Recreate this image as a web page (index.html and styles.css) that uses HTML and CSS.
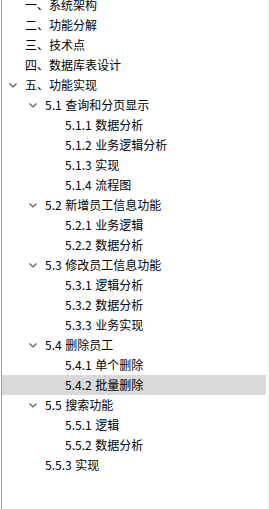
FILE: index.html
```html
<!DOCTYPE html>
<html lang="zh-CN">

<head>
    <meta charset="UTF-8">
    <meta name="viewport" content="width=device-width, initial-scale=1.0">
    <title>目录</title>
    <link rel="stylesheet" href="styles.css">
</head>

<body>
    <div id="outline">
        <ul class="tree">
            <li><div class="node"><span class="arrow"></span><span class="text">一、系统架构</span></div></li>
            <li><div class="node"><span class="arrow"></span><span class="text">二、功能分解</span></div></li>
            <li><div class="node"><span class="arrow"></span><span class="text">三、技术点</span></div></li>
            <li><div class="node"><span class="arrow"></span><span class="text">四、数据库表设计</span></div></li>
            <li>
                <div class="node"><span class="arrow open"><svg viewBox="0 0 8 5"><polyline points="0.5,0.5 4,4 7.5,0.5"/></svg></span><span class="text">五、功能实现</span></div>
                <ul>
                    <li>
                        <div class="node"><span class="arrow open"><svg viewBox="0 0 8 5"><polyline points="0.5,0.5 4,4 7.5,0.5"/></svg></span><span class="text">5.1 查询和分页显示</span></div>
                        <ul>
                            <li><div class="node"><span class="arrow"></span><span class="text">5.1.1 数据分析</span></div></li>
                            <li><div class="node"><span class="arrow"></span><span class="text">5.1.2 业务逻辑分析</span></div></li>
                            <li><div class="node"><span class="arrow"></span><span class="text">5.1.3 实现</span></div></li>
                            <li><div class="node"><span class="arrow"></span><span class="text">5.1.4 流程图</span></div></li>
                        </ul>
                    </li>
                    <li>
                        <div class="node"><span class="arrow open"><svg viewBox="0 0 8 5"><polyline points="0.5,0.5 4,4 7.5,0.5"/></svg></span><span class="text">5.2 新增员工信息功能</span></div>
                        <ul>
                            <li><div class="node"><span class="arrow"></span><span class="text">5.2.1 业务逻辑</span></div></li>
                            <li><div class="node"><span class="arrow"></span><span class="text">5.2.2 数据分析</span></div></li>
                        </ul>
                    </li>
                    <li>
                        <div class="node"><span class="arrow open"><svg viewBox="0 0 8 5"><polyline points="0.5,0.5 4,4 7.5,0.5"/></svg></span><span class="text">5.3 修改员工信息功能</span></div>
                        <ul>
                            <li><div class="node"><span class="arrow"></span><span class="text">5.3.1 逻辑分析</span></div></li>
                            <li><div class="node"><span class="arrow"></span><span class="text">5.3.2 数据分析</span></div></li>
                            <li><div class="node"><span class="arrow"></span><span class="text">5.3.3 业务实现</span></div></li>
                        </ul>
                    </li>
                    <li>
                        <div class="node"><span class="arrow open"><svg viewBox="0 0 8 5"><polyline points="0.5,0.5 4,4 7.5,0.5"/></svg></span><span class="text">5.4 删除员工</span></div>
                        <ul>
                            <li><div class="node"><span class="arrow"></span><span class="text">5.4.1 单个删除</span></div></li>
                            <li><div class="node active"><span class="arrow"></span><span class="text">5.4.2 批量删除</span></div></li>
                        </ul>
                    </li>
                    <li>
                        <div class="node"><span class="arrow open"><svg viewBox="0 0 8 5"><polyline points="0.5,0.5 4,4 7.5,0.5"/></svg></span><span class="text">5.5 搜索功能</span></div>
                        <ul>
                            <li><div class="node"><span class="arrow"></span><span class="text">5.5.1 逻辑</span></div></li>
                            <li><div class="node"><span class="arrow"></span><span class="text">5.5.2 数据分析</span></div></li>
                        </ul>
                    </li>
                    <li><div class="node"><span class="arrow"></span><span class="text">5.5.3 实现</span></div></li>
                </ul>
            </li>
        </ul>
    </div>
</body>

</html>
```

FILE: styles.css
```css
html,
body {
    margin: 0;
    height: 100%;
    background: #ffffff;
}

ul {
    margin: 0;
    padding: 0;
    list-style: none;
}

#outline {
    box-sizing: border-box;
    height: 100%;
    margin-left: 1px;
    border-left: 1px solid #a0a0a0;
    border-right: 1px solid #efefef;
    padding-right: 2px;
    overflow: hidden;
    font-family: "Noto Sans CJK SC", "Microsoft YaHei", sans-serif;
    font-size: 12px;
    color: #000000;
}

/* 滚动后的位置，第一行露出一半 */
.tree {
    margin-top: -5px;
    padding-left: 1px;
}

.tree ul {
    padding-left: 20px;
}

/* 选中背景要铺满整行 */
.tree ul li .node {
    margin-left: -21px;
    padding-left: 21px;
}

.tree ul ul li .node {
    margin-left: -41px;
    padding-left: 41px;
}

.node {
    display: flex;
    align-items: center;
    height: 20px;
    line-height: 20px;
    white-space: nowrap;
    cursor: pointer;
}

.node.active {
    background: #d9d9d9;
}

.arrow {
    display: flex;
    align-items: center;
    justify-content: center;
    width: 20px;
    height: 20px;
    flex: none;
}

.arrow svg {
    width: 8px;
    height: 5px;
    fill: none;
    stroke: #5a5a5a;
    stroke-width: 1.2;
}

.text {
    margin-left: 2px;
    word-spacing: 1px;
}
```
